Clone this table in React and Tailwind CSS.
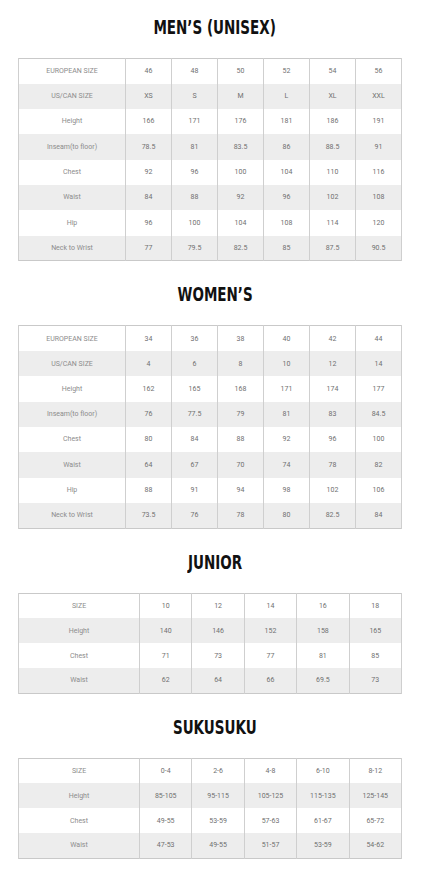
const SECTIONS = [
  {
    title: "MEN’S (UNISEX)",
    first: 107,
    tall: true,
    rows: [
      ['EUROPEAN SIZE', '46', '48', '50', '52', '54', '56'],
      ['US/CAN SIZE', 'XS', 'S', 'M', 'L', 'XL', 'XXL'],
      ['Height', '166', '171', '176', '181', '186', '191'],
      ['Inseam(to floor)', '78.5', '81', '83.5', '86', '88.5', '91'],
      ['Chest', '92', '96', '100', '104', '110', '116'],
      ['Waist', '84', '88', '92', '96', '102', '108'],
      ['Hip', '96', '100', '104', '108', '114', '120'],
      ['Neck to Wrist', '77', '79.5', '82.5', '85', '87.5', '90.5'],
    ],
  },
  {
    title: "WOMEN’S",
    first: 107,
    tall: true,
    rows: [
      ['EUROPEAN SIZE', '34', '36', '38', '40', '42', '44'],
      ['US/CAN SIZE', '4', '6', '8', '10', '12', '14'],
      ['Height', '162', '165', '168', '171', '174', '177'],
      ['Inseam(to floor)', '76', '77.5', '79', '81', '83', '84.5'],
      ['Chest', '80', '84', '88', '92', '96', '100'],
      ['Waist', '64', '67', '70', '74', '78', '82'],
      ['Hip', '88', '91', '94', '98', '102', '106'],
      ['Neck to Wrist', '73.5', '76', '78', '80', '82.5', '84'],
    ],
  },
  {
    title: 'JUNIOR',
    first: 121,
    rows: [
      ['SIZE', '10', '12', '14', '16', '18'],
      ['Height', '140', '146', '152', '158', '165'],
      ['Chest', '71', '73', '77', '81', '85'],
      ['Waist', '62', '64', '66', '69.5', '73'],
    ],
  },
  {
    title: 'SUKUSUKU',
    first: 121,
    rows: [
      ['SIZE', '0-4', '2-6', '4-8', '6-10', '8-12'],
      ['Height', '85-105', '95-115', '105-125', '115-135', '125-145'],
      ['Chest', '49-55', '53-59', '57-63', '61-67', '65-72'],
      ['Waist', '47-53', '49-55', '51-57', '53-59', '54-62'],
    ],
  },
]

const SizeTable = ({ section }) => (
  <table className="ml-[18px] w-[384px] table-fixed border-collapse border border-[#c9c9c9]">
    <colgroup>
      <col style={{ width: section.first }} />
    </colgroup>
    <tbody>
      {section.rows.map((row, i) => (
        <tr key={i} className={i % 2 === 1 ? 'bg-[#ededed]' : 'bg-white'}>
          {row.map((cell, j) => (
            <td
              key={j}
              className={`${section.tall ? 'h-[25.3px]' : 'h-[25px]'} p-0 text-center align-middle text-[7px] border-x border-[#cfcfcf] ${j === 0 ? 'text-[#8c8c8c]' : 'text-[#707070]'}`}
            >
              {cell}
            </td>
          ))}
        </tr>
      ))}
    </tbody>
  </table>
)

export default function App() {
  return (
    <div className="w-[430px] min-h-[871px] bg-white pt-[13px] font-['Roboto','Liberation_Sans',sans-serif]">
      {SECTIONS.map(s => (
        <div key={s.title} className="mb-[19px]">
          <div className="flex h-[28px] justify-center">
            <h1 className="inline-block scale-x-75 text-[20px] leading-[28px] font-bold whitespace-nowrap text-[#111] font-['DejaVu_Sans_Condensed','DejaVu_Sans',sans-serif]">
              {s.title}
            </h1>
          </div>
          <div className="mt-[17px]">
            <SizeTable section={s} />
          </div>
        </div>
      ))}
    </div>
  )
}
